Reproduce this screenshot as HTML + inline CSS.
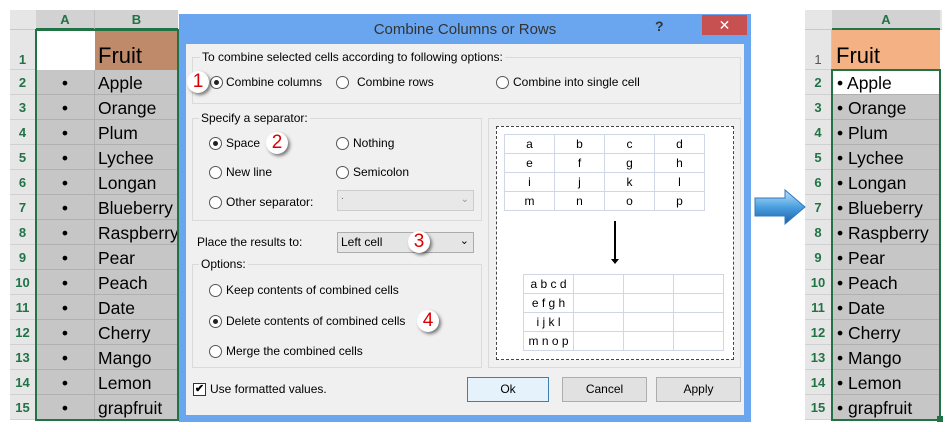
<!DOCTYPE html>
<html><head><meta charset="utf-8"><style>
*{box-sizing:border-box;margin:0;padding:0}
body{width:950px;height:432px;background:#fff;position:relative;overflow:hidden;font-family:"Liberation Sans",sans-serif}
.a{position:absolute}
.rh{position:absolute;background:#e6e6e6;border-right:1px solid #c8c8c8;border-bottom:1px solid #d0d0d0;color:#217346;font-weight:bold;font-size:13px;text-align:center;line-height:26px}
.cell{position:absolute;font-size:17.5px;line-height:27px;color:#000;border-bottom:1px solid #b0b0b0;border-right:1px solid #b0b0b0}
.dlg{font-size:12px;color:#000}
.rad{position:absolute;width:13px;height:13px;border:1px solid #555;border-radius:50%;background:#fff}
.rad.on::after{content:"";position:absolute;left:3px;top:3px;width:5px;height:5px;border-radius:50%;background:#222}
.lbl{position:absolute;font-size:12px;white-space:nowrap}
.grp{position:absolute;border:1px solid #dadada}
.badge{position:absolute;width:22px;height:22px;border-radius:50%;background:#fff;box-shadow:2px 2px 3px rgba(0,0,0,.5);color:#d00;font-size:19px;line-height:22px;text-align:center;font-family:"Liberation Sans",sans-serif}
.btn{position:absolute;height:25px;border:1px solid #adadad;background:#e1e1e1;text-align:center;line-height:23px;font-size:12px}
table{border-collapse:collapse;position:absolute;font-size:12px}
td{border:1px solid #cfd6e6;text-align:center;height:19px;width:50px;padding:0}
</style></head><body>
<div class="a" style="left:10px;top:10px;width:168px;height:20px;background:#e6e6e6;border-bottom:1px solid #c8c8c8"></div>
<div class="a" style="left:36px;top:10px;width:59px;height:20px;background:#d2d2d2;border-right:1px solid #c0c0c0;border-bottom:2px solid #217346;color:#217346;font-weight:bold;font-size:13px;text-align:center;line-height:19px">A</div>
<div class="a" style="left:95px;top:10px;width:83px;height:20px;background:#d2d2d2;border-bottom:2px solid #217346;color:#217346;font-weight:bold;font-size:13px;text-align:center;line-height:19px">B</div>
<div class="a" style="left:36px;top:30px;width:59px;height:40px;background:#fff"></div>
<div class="a" style="left:95px;top:30px;width:83px;height:40px;background:#bf8a6a;font-size:22px;padding:12px 0 0 3px;line-height:27px">Fruit</div>
<div class="rh" style="left:10px;top:30px;width:26px;height:40px;line-height:60px">1</div>
<div class="a" style="left:805px;top:10px;width:137px;height:20px;background:#e6e6e6;border-bottom:1px solid #c8c8c8"></div>
<div class="a" style="left:832px;top:10px;width:108px;height:20px;background:#d2d2d2;border-bottom:2px solid #217346;color:#217346;font-weight:bold;font-size:13px;text-align:center;line-height:19px">A</div>
<div class="a" style="left:832px;top:30px;width:108px;height:40px;background:#f4b183;font-size:22px;padding:12px 0 0 4px;line-height:27px">Fruit</div>
<div class="rh" style="left:805px;top:30px;width:27px;height:40px;line-height:60px;color:#555;font-weight:normal">1</div>
<div id="rows"></div>
<div class="a" style="left:35px;top:29px;width:144px;height:392px;border:2px solid #217346"></div>
<div class="a" style="left:831px;top:69px;width:110px;height:352px;border:2px solid #217346"></div>
<div class="a" style="left:937px;top:416px;width:6px;height:6px;background:#217346"></div>
<svg class="a" style="left:753px;top:188px" width="54" height="40"><defs><linearGradient id="g" x1="0" y1="0" x2="0" y2="1"><stop offset="0" stop-color="#bfe3fb"/><stop offset=".5" stop-color="#4aa0e0"/><stop offset="1" stop-color="#1d5fa8"/></linearGradient></defs><path d="M2 10 H32 V2 L52 19 L32 36 V28 H2 Z" fill="url(#g)" stroke="#3478c0" stroke-width="1"/></svg>
<div class="a dlg" style="left:179px;top:14px;width:572px;height:408px;background:#6aa6ef">
 <div class="a" style="left:0;top:0;width:572px;height:30px;text-align:center;line-height:32px;font-size:15px;color:#333">Combine Columns or Rows</div>
 <div class="a" style="left:476px;top:4px;font-size:14px;font-weight:bold;color:#333">?</div>
 <div class="a" style="left:523px;top:1px;width:45px;height:20px;background:#c75050;color:#fff;text-align:center;line-height:20px;font-size:14px">✕</div>
 <div class="a" style="left:7px;top:30px;width:558px;height:371px;background:#f0f0f0"></div>
</div>
<div class="dlg">
<div class="grp" style="left:192px;top:57px;width:549px;height:47px"></div>
<div class="lbl" style="left:200px;top:50px;background:#f0f0f0;padding:0 2px">To combine selected cells according to following options:</div>
<div class="rad on" style="left:210px;top:76px"></div><div class="lbl" style="left:226px;top:75px">Combine columns</div>
<div class="rad" style="left:336px;top:76px"></div><div class="lbl" style="left:357px;top:75px">Combine rows</div>
<div class="rad" style="left:496px;top:76px"></div><div class="lbl" style="left:513px;top:75px">Combine into single cell</div>
<div class="grp" style="left:192px;top:118px;width:290px;height:103px"></div>
<div class="lbl" style="left:199px;top:111px;background:#f0f0f0;padding:0 2px">Specify a separator:</div>
<div class="rad on" style="left:209px;top:137px"></div><div class="lbl" style="left:226px;top:136px">Space</div>
<div class="rad" style="left:336px;top:137px"></div><div class="lbl" style="left:353px;top:136px">Nothing</div>
<div class="rad" style="left:209px;top:166px"></div><div class="lbl" style="left:226px;top:165px">New line</div>
<div class="rad" style="left:336px;top:166px"></div><div class="lbl" style="left:353px;top:165px">Semicolon</div>
<div class="rad" style="left:209px;top:196px"></div><div class="lbl" style="left:226px;top:195px">Other separator:</div>
<div class="a" style="left:337px;top:190px;width:137px;height:21px;border:1px solid #ccc;background:#e8e8e8;font-size:10px;padding-left:3px;color:#666">.<span style="position:absolute;right:4px;top:3px;color:#999">⌄</span></div>
<div class="lbl" style="left:197px;top:235px">Place the results to:</div>
<div class="a" style="left:337px;top:232px;width:137px;height:21px;border:1px solid #acacac;background:#e5e5e5;font-size:12px;padding:2px 0 0 3px">Left cell<span style="position:absolute;right:4px;top:1px;font-size:11px">⌄</span></div>
<div class="grp" style="left:192px;top:264px;width:290px;height:104px"></div>
<div class="lbl" style="left:199px;top:257px;background:#f0f0f0;padding:0 2px">Options:</div>
<div class="rad" style="left:209px;top:284px"></div><div class="lbl" style="left:226px;top:283px">Keep contents of combined cells</div>
<div class="rad on" style="left:209px;top:315px"></div><div class="lbl" style="left:226px;top:314px">Delete contents of combined cells</div>
<div class="rad" style="left:209px;top:345px"></div><div class="lbl" style="left:226px;top:344px">Merge the combined cells</div>
<div class="a" style="left:193px;top:383px;width:13px;height:13px;border:1px solid #333;background:#fff;font-size:11px;line-height:11px;text-align:center;font-weight:bold">✔</div>
<div class="lbl" style="left:210px;top:382px">Use formatted values.</div>
<div class="btn" style="left:467px;top:377px;width:82px;border-color:#3c7fb1;background:#e5f1fb">Ok</div>
<div class="btn" style="left:562px;top:377px;width:85px">Cancel</div>
<div class="btn" style="left:656px;top:377px;width:85px">Apply</div>
<div class="grp" style="left:488px;top:118px;width:253px;height:250px"></div>
<div class="a" style="left:496px;top:126px;width:238px;height:234px;border:1px dashed #444;background:#fff"></div>
<table style="left:504px;top:134px"><tr><td>a</td><td>b</td><td>c</td><td>d</td></tr><tr><td>e</td><td>f</td><td>g</td><td>h</td></tr><tr><td>i</td><td>j</td><td>k</td><td>l</td></tr><tr><td>m</td><td>n</td><td>o</td><td>p</td></tr></table>
<div class="a" style="left:614px;top:221px;width:2px;height:41px;background:#000"></div>
<div class="a" style="left:611px;top:259px;width:0;height:0;border-left:4px solid transparent;border-right:4px solid transparent;border-top:5px solid #000"></div>
<table style="left:523px;top:274px"><tr><td>a b c d</td><td></td><td></td><td></td></tr><tr><td>e f g h</td><td></td><td></td><td></td></tr><tr><td>i j k l</td><td></td><td></td><td></td></tr><tr><td>m n o p</td><td></td><td></td><td></td></tr></table>
<div class="badge" style="left:187px;top:71px">1</div>
<div class="badge" style="left:266px;top:132px">2</div>
<div class="badge" style="left:408px;top:231px">3</div>
<div class="badge" style="left:417px;top:310px">4</div>
</div>
<script>
var f=["Apple","Orange","Plum","Lychee","Longan","Blueberry","Raspberry","Pear","Peach","Date","Cherry","Mango","Lemon","grapfruit"];
var h="";
for(var i=0;i<14;i++){var y=70+i*25,n=i+2;
h+='<div class="rh" style="left:10px;top:'+y+'px;width:26px;height:25px">'+n+'</div>';
h+='<div class="cell" style="left:36px;top:'+y+'px;width:59px;height:25px;background:#c6c6c6;text-align:center">•</div>';
h+='<div class="cell" style="left:95px;top:'+y+'px;width:83px;height:25px;background:#c6c6c6;padding-left:3px">'+f[i]+'</div>';
h+='<div class="rh" style="left:805px;top:'+y+'px;width:27px;height:25px">'+n+'</div>';
h+='<div class="cell" style="left:832px;top:'+y+'px;width:108px;height:25px;background:'+(i==0?'#fff':'#c6c6c6')+';padding-left:5px">• '+f[i]+'</div>';}
document.getElementById("rows").innerHTML=h;
</script>
</body></html>
